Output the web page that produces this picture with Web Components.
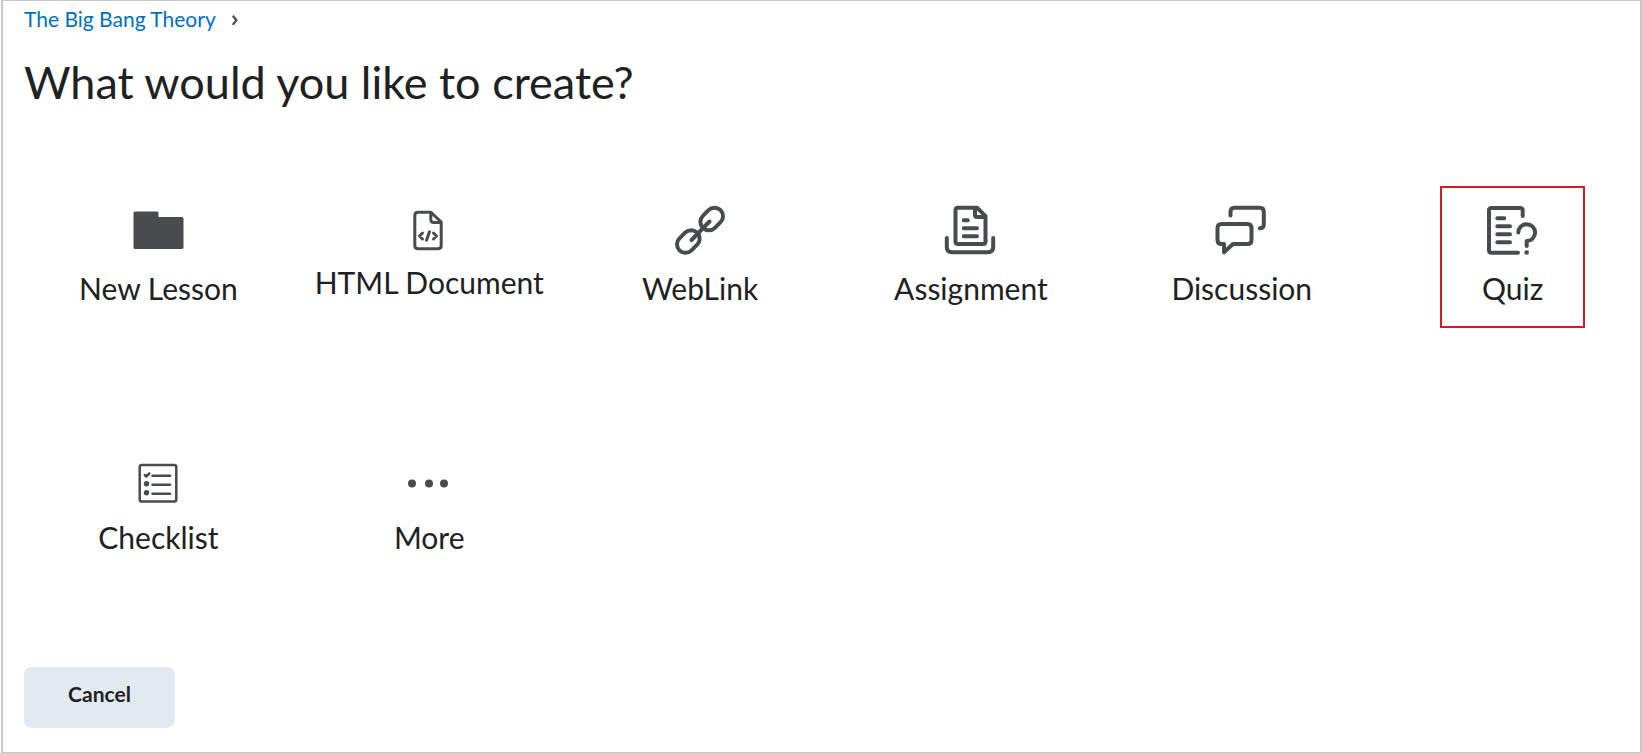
<!DOCTYPE html>
<html lang="en">
<head>
<meta charset="utf-8">
<title>What would you like to create?</title>
<style>
  body {
    margin: 0;
    background: #fff;
    color: #202122;
    font-family: Lato, 'Liberation Sans', sans-serif;
  }
</style>
</head>
<body>
<create-page heading="What would you like to create?">
  <crumb-link slot="crumbs" href="#course">The Big Bang Theory</crumb-link>
  <create-tile icon="folder">New Lesson</create-tile>
  <create-tile icon="html">HTML Document</create-tile>
  <create-tile icon="link">WebLink</create-tile>
  <create-tile icon="assignment">Assignment</create-tile>
  <create-tile icon="discussion">Discussion</create-tile>
  <create-tile icon="quiz" highlighted>Quiz</create-tile>
  <create-tile icon="checklist">Checklist</create-tile>
  <create-tile icon="more">More</create-tile>
  <soft-button slot="actions">Cancel</soft-button>
</create-page>

<script>
const ICONS = {
  folder: `<path fill="currentColor" d="M5 8.500h21q1.500 0 1.500 1.500v4H51q1.500 0 1.500 1.500v29q0 1.500-1.500 1.500H4q-1.500 0-1.500-1.500V10q0-1.500 1.500-1.500z"/>`,
  html: `<g stroke-width="3">
      <path d="M16 9.300h13L39.200 19v23.500q0 3.200-3.200 3.200H16q-3.200 0-3.200-3.200v-30q0-3.200 3.200-3.200z"/>
      <path d="M28.800 9.500v7q0 3 3 3h7"/>
      <path d="M20.500 30l-3 3 3 3M31.500 30l3 3-3 3M27.500 28.800l-3 8.400"/>
    </g>`,
  link: `<g stroke-width="4">
      <rect x="26.200" y="7.500" width="25" height="17" rx="8.500" transform="rotate(-45 38.700 16)"/>
      <rect x="2.800" y="30" width="25" height="17" rx="8.500" transform="rotate(-45 15.300 38.500)"/>
      <path d="M18.500 37L36.500 18.500"/>
    </g>`,
  assignment: `<g stroke-width="4">
      <path d="M14 4.700h19l8.500 8.500v25.300q0 2.500-2.500 2.500H14q-2.500 0-2.500-2.500V7.200q0-2.500 2.500-2.500z"/>
      <path d="M31 5.500V12q0 2 2 2h7.500"/>
      <path d="M19.800 17.300h4M19.800 25.300H33M19.800 33.300H33"/>
      <path d="M2.800 35v9q0 5.300 5.300 5.300h35.800q5.300 0 5.300-5.300v-9"/>
    </g>`,
  discussion: `<g stroke-width="4">
      <path d="M15.500 12.500V8.700q0-4 4-4h25.300q4 0 4 4v12.600q0 4-4 4"/>
      <path d="M6.500 21h26q4 0 4 4v12q0 4-4 4H18l-9 8.300V41H6.500q-4 0-4-4V25q0-4 4-4z"/>
    </g>`,
  quiz: `<g stroke-width="4">
      <path d="M36.700 13V7.500q0-2.500-2.500-2.500H5.500Q3 5 3 7.500v39.700q0 2.500 2.500 2.500H32"/>
      <path d="M11.300 15.300h7M11.300 23.300H24M11.300 31.300H24M11.300 39.300H24"/>
      <path d="M32.300 29.600a8.400 8.400 0 1 1 8.400 8.400v5"/>
    </g>
    <circle cx="40.700" cy="49.500" r="2.300" fill="currentColor"/>`,
  checklist: `<g stroke-width="2.500">
      <rect x="8.700" y="13" width="36.600" height="36.600" rx="2"/>
      <path d="M21.500 23.700H39M21.500 32.700H39M21.500 41.700H39"/>
      <path d="M13.800 23l1.500 1.500 3-3"/>
    </g>
    <g fill="currentColor"><circle cx="15.500" cy="31.700" r="2.700"/><circle cx="15.500" cy="40.700" r="2.700"/></g>`,
  more: `<g fill="currentColor"><circle cx="10" cy="31.500" r="4"/><circle cx="27" cy="31.500" r="4"/><circle cx="42" cy="31.500" r="4"/></g>`
};

class CreateTile extends HTMLElement {
  constructor() {
    super();
    this.attachShadow({ mode: 'open' });
  }

  connectedCallback() {
    this.render();
  }

  render() {
    const icon = this.getAttribute('icon');
    // the document icon sits in a shorter box than the others
    const height = icon === 'html' ? 48 : 54;

    this.shadowRoot.innerHTML = `
      <style>
        :host {
          display: flex;
          justify-content: center;
          align-items: flex-start;
        }

        button {
          display: flex;
          flex-direction: column;
          align-items: center;
          gap: 13px;
          min-width: 145px;
          padding: 15px 8px 20px;
          border: 2px solid transparent;
          background: none;
          color: inherit;
          font: inherit;
          font-size: 30px;
          line-height: 36px;
          white-space: nowrap;
          cursor: pointer;
        }

        :host([highlighted]) button {
          border-color: #cd2026;
        }

        svg {
          display: block;
          color: #494c4e;
          fill: none;
          stroke-linecap: round;
          stroke-linejoin: round;
        }

        g:not([fill]) {
          stroke: currentColor;
        }
      </style>
      <button type="button">
        <svg width="54" height="${height}" viewBox="0 0 54 ${height}" aria-hidden="true">${ICONS[icon]}</svg>
        <span><slot></slot></span>
      </button>
    `;
  }
}

class CrumbLink extends HTMLElement {
  constructor() {
    super();
    this.attachShadow({ mode: 'open' });
  }

  connectedCallback() {
    this.shadowRoot.innerHTML = `
      <style>
        :host {
          display: flex;
          align-items: center;
          gap: 16px;
          font-size: 21px;
          line-height: 24px;
        }

        a {
          color: #006fbf;
          text-decoration: none;
        }

        a:hover {
          text-decoration: underline;
        }

        svg {
          fill: none;
          stroke: #494c4e;
          stroke-width: 2.2;
        }
      </style>
      <a href="${this.getAttribute('href')}"><slot></slot></a>
      <svg width="6" height="12" viewBox="0 0 6 12" aria-hidden="true"><path d="M.8 2.800L4.500 7.300.8 11.800"/></svg>
    `;
  }
}

class SoftButton extends HTMLElement {
  constructor() {
    super();
    this.attachShadow({ mode: 'open' });
  }

  connectedCallback() {
    this.shadowRoot.innerHTML = `
      <style>
        :host {
          display: inline-block;
        }

        button {
          display: block;
          min-width: 151px;
          padding: 15px 40px 22px;
          border: none;
          border-radius: 8px;
          background: #e3e9f1;
          color: inherit;
          font: inherit;
          font-size: 21px;
          font-weight: bold;
          line-height: 24px;
          cursor: pointer;
        }

        button:hover {
          background: #d3dbe6;
        }
      </style>
      <button type="button"><slot></slot></button>
    `;
  }
}

class CreatePage extends HTMLElement {
  constructor() {
    super();
    this.attachShadow({ mode: 'open' });
  }

  connectedCallback() {
    this.shadowRoot.innerHTML = `
      <style>
        :host {
          display: block;
          box-sizing: border-box;
          min-height: 100vh;
          margin-left: 1px;
          padding: 6px 0 24px;
          border: 1px solid #c8c8c8;
          border-width: 1px 2px;
        }

        header, footer {
          padding: 0 21px;
        }

        h1 {
          margin: 25px 0 0;
          font-size: 45px;
          font-weight: normal;
          line-height: 52px;
        }

        main {
          display: grid;
          grid-template-columns: repeat(6, minmax(0, 1fr));
          gap: 107px 16px;
          margin: 78px 0 90px;
          padding-left: 28px;
        }
      </style>
      <header>
        <nav aria-label="Breadcrumb"><slot name="crumbs"></slot></nav>
        <h1>${this.getAttribute('heading')}</h1>
      </header>
      <main><slot></slot></main>
      <footer><slot name="actions"></slot></footer>
    `;
  }
}

customElements.define('create-tile', CreateTile);
customElements.define('crumb-link', CrumbLink);
customElements.define('soft-button', SoftButton);
customElements.define('create-page', CreatePage);
</script>
</body>
</html>
